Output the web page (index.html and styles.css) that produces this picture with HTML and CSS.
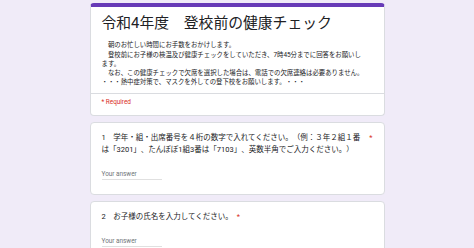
FILE: index.html
```html
<!DOCTYPE html>
<html lang="ja">
<head>
    <meta charset="UTF-8">
    <meta name="viewport" content="width=device-width, initial-scale=1.0">
    <title>令和4年度　登校前の健康チェック</title>
    <link rel="stylesheet" href="styles.css">
</head>
<body>
    <div class="form">
        <!-- タイトルカード -->
        <div class="card head">
            <div class="head-main">
                <h1 class="title">令和4年度　登校前の健康チェック</h1>
                <div class="desc">　朝のお忙しい時間にお手数をおかけします。
　登校前にお子様の検温及び健康チェックをしていただき、7時45分までに回答をお願いします。
　なお、この健康チェックで欠席を選択した場合は、電話での欠席連絡は必要ありません。
・・・熱中症対策で、マスクを外しての登下校をお願いします。・・・</div>
            </div>
            <div class="required">* Required</div>
        </div>

        <!-- 質問1 -->
        <div class="card question">
            <div class="q-title">
                <span class="q-text">1　学年・組・出席番号を４桁の数字で入れてください。（例：３年２組１番は「3201」、たんぽぽ1組3番は「7103」、英数半角でご入力ください。）</span>
                <span class="req">*</span>
            </div>
            <div class="answer">Your answer</div>
        </div>

        <!-- 質問2 -->
        <div class="card question">
            <div class="q-title">
                <span class="q-text">2　お子様の氏名を入力してください。</span>
                <span class="req">*</span>
            </div>
            <div class="answer">Your answer</div>
        </div>
    </div>
</body>
</html>
```

FILE: styles.css
```css
*{
    margin: 0;
    padding: 0;
    box-sizing: border-box;
}

body{
    background-color: #f0ebf8;
    font-family: Roboto, "Noto Sans CJK JP", sans-serif;
    color: #202124;
    text-spacing-trim: space-all;
}

.form{
    width: 295px;
    margin: 0 auto;
    padding-top: 3px;
    display: flex;
    flex-direction: column;
    gap: 6px;
}

.card{
    background-color: white;
    border: 1px solid #dadce0;
    border-radius: 4px;
}

.head{
    border-top: 4.5px solid #673ab7;
}

.head-main{
    padding: 7px 11px 6px 11px;
    border-bottom: 1px solid #dadce0;
}

.title{
    font-size: 14.8px;
    font-weight: 400;
    line-height: 18.4px;
}

.desc{
    margin-top: 9px;
    font-size: 6.4px;
    line-height: 9.2px;
    white-space: pre-wrap;
    max-width: 41.2em;
}

.required{
    padding: 4px 11px 8px;
    font-size: 6.4px;
    line-height: 9px;
    color: #d93025;
}

.question{
    padding: 8.5px 11px 14px;
}

.q-title{
    display: flex;
    align-items: flex-start;
    font-size: 7.5px;
    line-height: 12px;
}

.q-text{
    flex: 0 1 auto;
}

.req{
    flex: none;
    padding-left: 4px;
    color: #d93025;
}

.answer{
    margin-top: 13.5px;
    width: 60px;
    font-size: 6.4px;
    line-height: 10px;
    color: #70757a;
    border-bottom: 1px solid #e0e0e0;
}
```
